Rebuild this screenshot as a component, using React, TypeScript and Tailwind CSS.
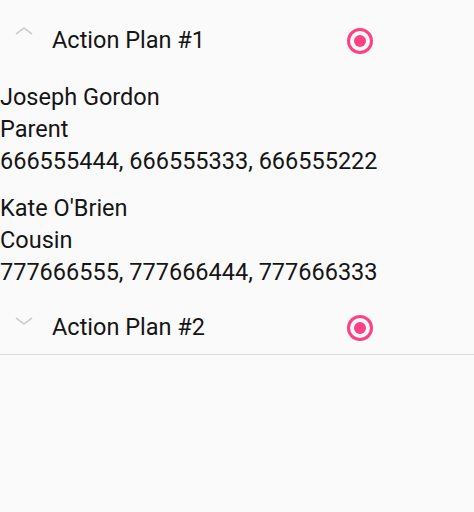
import React from "react";

function ChevronUp() {
  return (
    <svg width="18" height="8" viewBox="0 0 18 8" className="block">
      <polyline points="1,7 9,1 17,7" fill="none" stroke="#cfcfcf" strokeWidth="1.6" />
    </svg>
  );
}
function ChevronDown() {
  return (
    <svg width="18" height="8" viewBox="0 0 18 8" className="block">
      <polyline points="1,1 9,7 17,1" fill="none" stroke="#cfcfcf" strokeWidth="1.6" />
    </svg>
  );
}
function Radio() {
  return (
    <div className="w-[26px] h-[26px] rounded-full border-[3px] border-[#ff4081] flex items-center justify-center">
      <div className="w-[12px] h-[12px] rounded-full bg-[#ff4081]" />
    </div>
  );
}

export default function App() {
  const groups = [
    ["Joseph Gordon", "Parent", "666555444, 666555333, 666555222"],
    ["Kate O'Brien", "Cousin", "777666555, 777666444, 777666333"],
  ];
  return (
    <div className="w-[474px] h-[512px] bg-[#fafafa] text-[#151515] font-['Roboto',sans-serif]">
      <div className="h-[81px] flex items-center">
        <div className="w-[52px] pl-[15px] self-start mt-[27px]">
          <ChevronUp />
        </div>
        <div className="w-[295px] text-[23.5px] leading-none">Action Plan #1</div>
        <Radio />
      </div>
      <div className="flex flex-col gap-[15px]">
        {groups.map((g, i) => (
          <div key={i} className="text-[23.5px] leading-[32px]">
            {g.map((l, j) => (
              <div key={j}>{l}</div>
            ))}
          </div>
        ))}
      </div>
      <div className="pt-[14px] border-b border-[#dcdcdc]">
        <div className="h-[52px] flex items-center">
          <div className="w-[52px] pl-[15px] self-start mt-[15px]">
            <ChevronDown />
          </div>
          <div className="w-[295px] text-[23.5px] leading-none">Action Plan #2</div>
          <Radio />
        </div>
      </div>
    </div>
  );
}
